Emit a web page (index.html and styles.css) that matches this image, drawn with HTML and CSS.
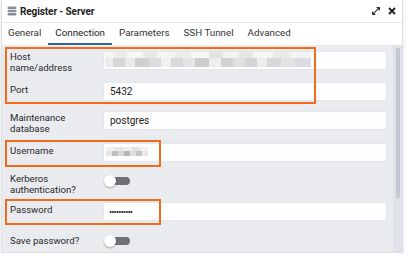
FILE: index.html
```html
<!DOCTYPE html>
<html>
<head>
<meta charset="utf-8">
<link rel="stylesheet" href="styles.css">
</head>
<body>
<div class="dialog">
  <div class="titlebar">
    <svg class="ticon" viewBox="0 0 10 10" width="10" height="10">
      <rect x="0.5" y="0.5" width="9" height="2.6" rx="1.2" fill="#8a8f98"/>
      <rect x="0.5" y="3.7" width="9" height="2.6" rx="1.2" fill="#8a8f98"/>
      <rect x="0.5" y="6.9" width="9" height="2.6" rx="1.2" fill="#8a8f98"/>
    </svg>
    <span class="title">Register - Server</span>
    <span class="tspacer"></span>
    <svg class="expand" viewBox="0 0 10 10" width="10" height="10">
      <path d="M2.2 7.8 L7.8 2.2" stroke="#333" stroke-width="1.2" fill="none"/>
      <path d="M5 1 L9 1 L9 5 Z" fill="#333"/>
      <path d="M1 5 L1 9 L5 9 Z" fill="#333"/>
    </svg>
    <svg class="close" viewBox="0 0 8 8" width="8" height="8">
      <path d="M1 1 L7 7 M7 1 L1 7" stroke="#222" stroke-width="1.8" fill="none"/>
    </svg>
  </div>
  <div class="tabs">
    <span class="tab">General</span>
    <span class="tab active">Connection</span>
    <span class="tab">Parameters</span>
    <span class="tab">SSH Tunnel</span>
    <span class="tab">Advanced</span>
  </div>
  <div class="body">
    <div class="form">
      <div class="row r-host">
        <div class="label">Host<br>name/address</div>
        <div class="input"><div class="mosaic"><div class="m1"></div><div class="m2"></div></div></div>
      </div>
      <div class="row r-port">
        <div class="label lone">Port</div>
        <div class="input">5432</div>
      </div>
      <div class="row r-maint">
        <div class="label two">Maintenance<br>database</div>
        <div class="input">postgres</div>
      </div>
      <div class="row r-user">
        <div class="label lone">Username</div>
        <div class="input"><div class="umosaic"><div class="u1"></div><div class="u2"></div></div></div>
      </div>
      <div class="row r-kerb">
        <div class="label two">Kerberos<br>authentication?</div>
        <div class="toggle"><span class="track"></span><span class="knob"></span></div>
      </div>
      <div class="row r-pass">
        <div class="label lone">Password</div>
        <div class="input dots">••••••••••</div>
      </div>
      <div class="row r-save">
        <div class="label lone">Save password?</div>
        <div class="toggle"><span class="track"></span><span class="knob"></span></div>
      </div>
    </div>
    <div class="scroll"><div class="thumb"></div></div>
    <div class="hl hl1"></div>
    <div class="hl hl2"></div>
    <div class="hl hl3"></div>
  </div>
</div>
</body>
</html>
```
FILE: styles.css
```css
* { box-sizing: border-box; }
body {
  margin: 0;
  background: #ffffff;
  font-family: Roboto, "Liberation Sans", sans-serif;
  color: #222;
}
.dialog {
  margin-left: 1px;
  width: 402px;
  height: 253px;
  border: 1px solid #dcdfe4;
  border-top: none;
  box-shadow: 0 2px 5px rgba(0, 0, 0, 0.10);
  display: flex;
  flex-direction: column;
  background: #fff;
  overflow: hidden;
}
.titlebar {
  height: 23px;
  flex: none;
  display: flex;
  align-items: center;
  padding: 0 6px 0 5px;
  border-bottom: 1px solid #e6e8ec;
}
.ticon { margin-right: 3px; }
.title {
  font-size: 10px;
  font-weight: 700;
  color: #222;
  letter-spacing: -0.1px;
}
.tspacer { flex: 1; }
.expand { margin-right: 7px; }
.tabs {
  height: 22px;
  flex: none;
  display: flex;
  margin-left: -1px;
}
.tab {
  padding: 0 7px;
  font-size: 9.8px;
  line-height: 20px;
  color: #333;
  border-bottom: 2px solid transparent;
}
.tab.active {
  border-bottom-color: #326690;
  color: #222;
}
.body {
  flex: 1;
  display: flex;
  position: relative;
  background: #e9ebef;
}
.form {
  flex: 1;
  padding: 6px 6px 0 8px;
  display: flex;
  flex-direction: column;
}
.row {
  display: flex;
  align-items: flex-start;
  flex: none;
}
.r-host { height: 31px; }
.r-port { height: 29px; }
.r-maint { height: 32px; }
.r-user { height: 30px; }
.r-kerb { height: 29px; }
.r-pass { height: 31px; }
.r-save { height: 20px; }
.label {
  width: 93px;
  flex: none;
  font-size: 9.6px;
  line-height: 10.5px;
  color: #2a2a2a;
  padding-top: 1px;
}
.label.lone { padding-top: 3px; }
.label.two { padding-top: 2px; }
.r-kerb .label { padding-top: 1px; }
.input {
  width: 284px;
  height: 19px;
  flex: none;
  background: #fdfdfd;
  border: 1px solid #e2e5ea;
  border-radius: 2px;
  font-size: 10px;
  line-height: 17px;
  padding-left: 6px;
  color: #222;
}
.dots {
  font-size: 9.5px;
  letter-spacing: -0.9px;
  line-height: 17px;
  padding-left: 5px;
}
.mosaic { width: 206px; margin-top: 0; margin-left: -5px; }
.m1 {
  height: 6px;
  background: linear-gradient(90deg,
    #f3f3f3 0 10px, #ebebeb 10px 22px, #f6f6f6 22px 38px, #e8e8e8 38px 52px,
    #f4f4f4 52px 70px, #ececec 70px 86px, #f7f7f7 86px 104px, #e3e3e3 104px 118px,
    #f2f2f2 118px 134px, #e6e6e6 134px 148px, #f5f5f5 148px 168px, #eaeaea 168px 186px,
    #f3f3f3 186px 206px);
}
.m2 {
  height: 9px;
  background: linear-gradient(90deg,
    #ededed 0 8px, #d6d6d6 8px 20px, #e9e9e9 20px 30px, #cfcfcf 30px 44px,
    #dcdcdc 44px 56px, #f0f0f0 56px 66px, #d9d9d9 66px 78px, #e4e4e4 78px 90px,
    #cccccc 90px 104px, #eeeeee 104px 116px, #d2d2d2 116px 128px, #e0e0e0 128px 140px,
    #d5d5d5 140px 152px, #ececec 152px 162px, #d8d8d8 162px 176px, #e3e3e3 176px 190px,
    #dadce2 190px 206px);
}
.umosaic { width: 42px; margin-top: 3px; margin-left: -4px; }
.u1 {
  height: 4px;
  background: linear-gradient(90deg,
    #f2f2f2 0 8px, #e6e6e6 8px 16px, #ededed 16px 26px, #e2e2e2 26px 34px, #f0f0f0 34px 42px);
}
.u2 {
  height: 5px;
  background: linear-gradient(90deg,
    #e6e6e6 0 6px, #bdbdbd 6px 12px, #d8d8d8 12px 18px, #b8b8b8 18px 24px,
    #dedede 24px 30px, #c4c4c4 30px 36px, #e8e8e8 36px 42px);
}
.toggle {
  position: relative;
  width: 28px;
  height: 13px;
  margin-top: 1px;
  margin-left: 1px;
  flex: none;
}
.track {
  position: absolute;
  left: 8px;
  top: 3px;
  width: 18px;
  height: 8px;
  border-radius: 4px;
  background: #6f7174;
}
.knob {
  position: absolute;
  left: 0;
  top: 1px;
  width: 12px;
  height: 12px;
  border-radius: 50%;
  background: #fff;
  box-shadow: 0 1px 2px rgba(0, 0, 0, 0.3);
}
.scroll {
  width: 9px;
  flex: none;
  background: #dfe2e8;
  padding: 3px 1px 0 3px;
}
.thumb {
  width: 4px;
  height: 150px;
  background: #c2c7d1;
  border-radius: 1px;
}
.hl {
  position: absolute;
  border: 2px solid #f26b1d;
  pointer-events: none;
}
.hl1 { left: 3px; top: 2px; width: 311px; height: 57px; }
.hl2 { left: 3px; top: 95px; width: 156px; height: 27px; }
.hl3 { left: 3px; top: 154px; width: 156px; height: 26px; }
```
